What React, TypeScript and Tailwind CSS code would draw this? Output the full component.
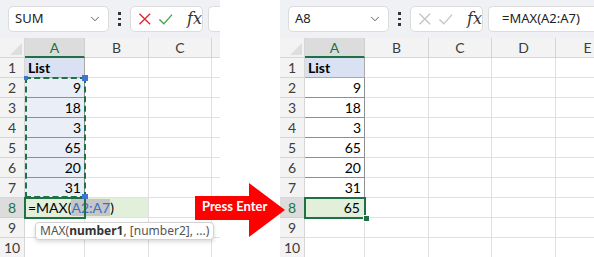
import React from 'react';
import { ChevronDown } from 'lucide-react';

const COLS = ['A', 'B', 'C', 'D', 'E'];
const COL_W = [60, 64, 63, 64, 64];
const VALUES = ['', '9', '18', '3', '65', '20', '31'];

interface PanelProps {
  side: 'before' | 'after';
  width: number;
}

function CancelEnter({ active }: { active: boolean }) {
  const red = active ? '#e0262e' : '#c4c4c4';
  const green = active ? '#3fa34d' : '#c4c4c4';
  return (
    <div className="flex items-center h-[26px] w-[73px] shrink-0 rounded-[5px] border border-[#dcdcdc] bg-white pl-[7px] gap-[6px]">
      <svg width="14" height="14" viewBox="0 0 14 14">
        <path d="M1.5 1.5 L12.5 12.5 M12.5 1.5 L1.5 12.5" stroke={red} strokeWidth="1.4" fill="none" />
      </svg>
      <svg width="16" height="14" viewBox="0 0 16 14">
        <path d="M1.5 7.5 L6 12 L14.5 2.5" stroke={green} strokeWidth="1.4" fill="none" />
      </svg>
      <span className="ml-[8px] text-[16px] italic text-[#333] leading-none" style={{ fontFamily: '"DejaVu Serif", "Liberation Serif", serif' }}>
        fx
      </span>
    </div>
  );
}

function FormulaBand({ side }: { side: 'before' | 'after' }) {
  const editing = side === 'before';
  return (
    <div className="flex items-start h-[38px] bg-[#eff1f4] pt-[6px] pl-[8px] shrink-0" style={{ fontFamily: '"Noto Sans", "Open Sans", sans-serif' }}>
      <div className="flex items-center justify-between h-[26px] w-[101px] shrink-0 rounded-[5px] border border-[#dcdcdc] bg-white pl-[6px] pr-[6px] text-[13px] text-[#222]">
        <span>{editing ? 'SUM' : 'A8'}</span>
        <ChevronDown size={14} strokeWidth={1.6} color="#555" />
      </div>
      <div className="flex flex-col items-center justify-center gap-[3px] h-[26px] w-[21px] shrink-0">
        <div className="w-[2.5px] h-[2.5px] bg-[#333]" />
        <div className="w-[2.5px] h-[2.5px] bg-[#333]" />
        <div className="w-[2.5px] h-[2.5px] bg-[#333]" />
      </div>
      <CancelEnter active={editing} />
      <div className="ml-[5px] flex items-center h-[26px] grow rounded-l-[5px] border border-r-0 border-[#dcdcdc] bg-white pl-[13px] text-[13px] text-[#222] whitespace-nowrap">
        {editing ? '' : '=MAX(A2:A7)'}
      </div>
    </div>
  );
}

function Panel({ side, width }: PanelProps) {
  const before = side === 'before';
  const rows = Array.from({ length: 10 }, (_, i) => i + 1);
  // the left shot is cropped inside column D, so its D/E letters are not shown
  const visibleCols = before ? 3 : 5;
  return (
    <div className="flex flex-col shrink-0 overflow-hidden h-[257px]" style={{ width }}>
      <FormulaBand side={side} />
      <div className="relative" style={{ fontFamily: 'Lato, "Liberation Sans", sans-serif' }}>
        {/* column headers */}
        <div className="flex h-[20px]">
          <div className="relative w-[25px] shrink-0 bg-[#f3f3f3] border-r border-b border-[#d6d6d6]">
            <div className="absolute right-[2px] bottom-[2px] w-0 h-0 border-l-[12px] border-l-transparent border-b-[12px] border-b-[#dedede]" />
          </div>
          {COLS.map((c, i) => (
            <div
              key={c}
              className={
                c === 'A'
                  ? 'flex items-center justify-center shrink-0 bg-[#dcdcdc] border-r border-[#cfcfcf] border-b-2 border-b-[#1f7145] text-[14px] text-[#1f7145]'
                  : 'flex items-center justify-center shrink-0 bg-[#f3f3f3] border-r border-b border-[#d6d6d6] text-[14px] text-[#3c3c3c]'
              }
              style={{ width: COL_W[i] }}
            >
              {i < visibleCols ? c : ''}
            </div>
          ))}
        </div>
        {rows.map((r) => {
          const active = r === 8;
          let aCell: React.ReactNode = null;
          let aClass = 'border-r border-b border-[#e1e1e1] bg-white';
          if (r === 1) {
            aClass = 'border-r border-b border-[#a8a8a8] bg-[#d9e1f2]';
            aCell = <span className="pl-[3px] font-bold text-[14px] text-black">List</span>;
          } else if (r >= 2 && r <= 7) {
            aClass = before
              ? 'border-r border-b border-[#8f8f8f] bg-[#e9eef7] justify-end'
              : 'border-r border-b border-[#8f8f8f] bg-white justify-end';
            aCell = <span className="pr-[3px] text-[14px] text-black">{VALUES[r - 1]}</span>;
          } else if (active) {
            aClass = before
              ? 'border-b border-[#e1e1e1] bg-[#e2efda] overflow-visible'
              : 'border-r border-b border-[#e1e1e1] bg-[#e2efda] justify-end';
            aCell = before ? (
              <span className="relative z-10 pl-[3px] text-[14px] text-black whitespace-nowrap">
                =MAX(<span className="bg-[#c6c6c6] text-[#3f6fc4]">A2:A7</span>)
              </span>
            ) : (
              <span className="pr-[4px] text-[14px] text-black">65</span>
            );
          }
          return (
            <div key={r} className="flex h-[20px]">
              <div
                className={
                  active
                    ? 'flex items-center justify-center w-[25px] shrink-0 bg-[#dcdcdc] border-r border-b border-[#cfcfcf] text-[14px] text-[#1f7145]'
                    : 'flex items-center justify-center w-[25px] shrink-0 bg-[#f3f3f3] border-r border-b border-[#d6d6d6] text-[14px] text-[#3c3c3c]'
                }
              >
                {r}
              </div>
              <div className={`flex items-center shrink-0 w-[60px] ${aClass}`}>{aCell}</div>
              {COLS.slice(1).map((c, i) => (
                <div
                  key={c}
                  className={
                    before && active && c === 'B'
                      ? 'shrink-0 bg-[#e2efda] border-r border-b border-[#e1e1e1]'
                      : 'shrink-0 bg-white border-r border-b border-[#e1e1e1]'
                  }
                  style={{ width: COL_W[i + 1] }}
                />
              ))}
            </div>
          );
        })}

        {/* active cell A8 */}
        <div className="absolute left-[24px] top-[159px] w-[62px] h-[22px] border-2 border-[#1f7145] z-20" />
        {!before && (
          <div className="absolute left-[83px] top-[177px] w-[7px] h-[7px] bg-[#1f7145] border border-white z-30" />
        )}

        {before && (
          <>
            {/* referenced range A2:A7 */}
            <div className="absolute left-[25px] top-[39px] w-[61px] h-[121px] border-2 border-dashed border-[#1f7145] z-20" />
            <div className="absolute left-[24px] top-[38px] w-[4px] h-[4px] bg-[#3f74d4] z-30" />
            <div className="absolute left-[82px] top-[37px] w-[6px] h-[6px] bg-[#3f74d4] z-30" />
            <div className="absolute left-[82px] top-[156px] w-[6px] h-[5px] bg-[#3f74d4] z-30" />
            {/* function tooltip */}
            <div
              className="absolute left-[35px] top-[184px] h-[18px] px-[4px] flex items-center rounded-[4px] border border-[#d2d2d2] bg-white shadow-[0_2px_4px_rgba(0,0,0,0.15)] z-30 text-[12px] text-[#555] whitespace-nowrap"
              style={{ fontFamily: '"Noto Sans", "Open Sans", sans-serif' }}
            >
              MAX(<span className="font-bold text-[#333]">number1</span>, [number2], ...)
            </div>
          </>
        )}
      </div>
    </div>
  );
}

function PressEnterArrow() {
  return (
    <div className="absolute left-[195px] top-[183px] w-[91px] h-[55px] z-40">
      <svg width="91" height="55" viewBox="0 0 91 55" className="absolute inset-0">
        <polygon points="0,13 54,13 54,0 90,27 54,54 54,37 0,37" fill="#ff0000" />
      </svg>
      <span
        className="absolute left-[7px] top-[17px] text-[13px] font-bold text-white leading-none whitespace-nowrap"
        style={{ fontFamily: 'Lato, "Liberation Sans", sans-serif' }}
      >
        Press Enter
      </span>
    </div>
  );
}

export default function App() {
  return (
    <div className="relative flex w-[594px] h-[257px] bg-white overflow-hidden">
      <Panel side="before" width={220} />
      <div className="w-[60px] shrink-0" />
      <Panel side="after" width={314} />
      <PressEnterArrow />
    </div>
  );
}
